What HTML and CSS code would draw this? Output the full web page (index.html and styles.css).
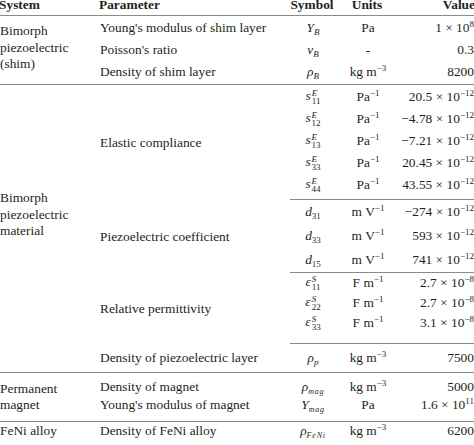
FILE: index.html
```html
<!DOCTYPE html>
<html>
<head>
<meta charset="utf-8">
<link rel="stylesheet" href="styles.css">
</head>
<body>
<div class="tbl">
  <div class="head">
    <div class="sys">System</div>
    <div class="par">Parameter</div>
    <div class="sym">Symbol</div>
    <div class="unit">Units</div>
    <div class="val">Value</div>
  </div>

  <div class="sec s1">
    <div class="sys">Bimorph<br>piezoelectric<br>(shim)</div>
    <div class="groups">
      <div class="grp">
        <div class="par">Young's modulus of shim layer</div>
        <div class="rows"><div class="row h22"><div class="sym"><i>Y</i><sub><i>B</i></sub></div><div class="unit">Pa</div><div class="val">1 × 10<sup>8</sup></div></div></div>
      </div>
      <div class="grp">
        <div class="par">Poisson's ratio</div>
        <div class="rows"><div class="row h22"><div class="sym"><i>ν</i><sub><i>B</i></sub></div><div class="unit">-</div><div class="val">0.3</div></div></div>
      </div>
      <div class="grp">
        <div class="par">Density of shim layer</div>
        <div class="rows"><div class="row h21"><div class="sym"><i>ρ</i><sub><i>B</i></sub></div><div class="unit">kg m<sup>−3</sup></div><div class="val">8200</div></div></div>
      </div>
    </div>
  </div>

  <div class="sec s2">
    <div class="sys">Bimorph<br>piezoelectric<br>material</div>
    <div class="groups">
      <div class="grp">
        <div class="par">Elastic compliance</div>
        <div class="rows cmid g-s">
          <div class="row h22"><div class="sym"><i>s</i><span class="ss"><i>E</i><span>11</span></span></div><div class="unit">Pa<sup>−1</sup></div><div class="val">20.5 × 10<sup>−12</sup></div></div>
          <div class="row h22"><div class="sym"><i>s</i><span class="ss"><i>E</i><span>12</span></span></div><div class="unit">Pa<sup>−1</sup></div><div class="val">−4.78 × 10<sup>−12</sup></div></div>
          <div class="row h22"><div class="sym"><i>s</i><span class="ss"><i>E</i><span>13</span></span></div><div class="unit">Pa<sup>−1</sup></div><div class="val">−7.21 × 10<sup>−12</sup></div></div>
          <div class="row h22"><div class="sym"><i>s</i><span class="ss"><i>E</i><span>33</span></span></div><div class="unit">Pa<sup>−1</sup></div><div class="val">20.45 × 10<sup>−12</sup></div></div>
          <div class="row h22"><div class="sym"><i>s</i><span class="ss"><i>E</i><span>44</span></span></div><div class="unit">Pa<sup>−1</sup></div><div class="val">43.55 × 10<sup>−12</sup></div></div>
        </div>
      </div>
      <div class="grp">
        <div class="par">Piezoelectric coefficient</div>
        <div class="rows cmid">
          <div class="row h24"><div class="sym"><i>d</i><sub>31</sub></div><div class="unit">m V<sup>−1</sup></div><div class="val">−274 × 10<sup>−12</sup></div></div>
          <div class="row h24"><div class="sym"><i>d</i><sub>33</sub></div><div class="unit">m V<sup>−1</sup></div><div class="val">593 × 10<sup>−12</sup></div></div>
          <div class="row h24"><div class="sym"><i>d</i><sub>15</sub></div><div class="unit">m V<sup>−1</sup></div><div class="val">741 × 10<sup>−12</sup></div></div>
        </div>
      </div>
      <div class="grp">
        <div class="par">Relative permittivity</div>
        <div class="rows cmid g-e">
          <div class="row h20"><div class="sym"><i>ε</i><span class="ss"><i>S</i><span>11</span></span></div><div class="unit">F m<sup>−1</sup></div><div class="val">2.7 × 10<sup>−8</sup></div></div>
          <div class="row h20"><div class="sym"><i>ε</i><span class="ss"><i>S</i><span>22</span></span></div><div class="unit">F m<sup>−1</sup></div><div class="val">2.7 × 10<sup>−8</sup></div></div>
          <div class="row h20"><div class="sym"><i>ε</i><span class="ss"><i>S</i><span>33</span></span></div><div class="unit">F m<sup>−1</sup></div><div class="val">3.1 × 10<sup>−8</sup></div></div>
        </div>
      </div>
      <div class="grp">
        <div class="par">Density of piezoelectric layer</div>
        <div class="rows">
          <div class="row h28"><div class="sym"><i>ρ</i><sub><i>p</i></sub></div><div class="unit">kg m<sup>−3</sup></div><div class="val">7500</div></div>
        </div>
      </div>
    </div>
  </div>

  <div class="sec s3">
    <div class="sys">Permanent<br>magnet</div>
    <div class="groups">
      <div class="grp">
        <div class="par">Density of magnet</div>
        <div class="rows"><div class="row h18"><div class="sym"><i>ρ</i><sub class="wide"><i>mag</i></sub></div><div class="unit">kg m<sup>−3</sup></div><div class="val">5000</div></div></div>
      </div>
      <div class="grp">
        <div class="par">Young's modulus of magnet</div>
        <div class="rows"><div class="row h17"><div class="sym"><i>Y</i><sub class="wide"><i>mag</i></sub></div><div class="unit">Pa</div><div class="val">1.6 × 10<sup>11</sup></div></div></div>
      </div>
    </div>
  </div>

  <div class="sec s4">
    <div class="sys">FeNi alloy</div>
    <div class="groups">
      <div class="grp">
        <div class="par">Density of FeNi alloy</div>
        <div class="rows"><div class="row h18"><div class="sym"><i>ρ</i><sub class="wide"><i>FeNi</i></sub></div><div class="unit">kg m<sup>−3</sup></div><div class="val">6200</div></div></div>
      </div>
    </div>
  </div>
</div>
</body>
</html>
```

FILE: styles.css
```css
html, body {
  margin: 0;
  padding: 0;
  background: #fff;
  overflow: hidden;
}
body {
  font-family: "Liberation Serif", "Times New Roman", serif;
  font-size: 13.4px;
  color: #231f20;
  width: 474px;
  height: 445px;
}
.tbl {
  width: 476px;
  margin-left: -1px;
  margin-top: -5px;
}
.head {
  display: flex;
  height: 20px;
  align-items: center;
  font-weight: bold;
  border-bottom: 1.5px solid #8a8a8a;
}
.sys {
  width: 100px;
  flex: none;
  line-height: 16.5px;
}
.par {
  width: 190px;
  flex: none;
}
.sym {
  width: 46px;
  flex: none;
  text-align: center;
}
.unit {
  width: 64px;
  flex: none;
  text-align: center;
}
.val {
  width: 76px;
  flex: none;
  text-align: right;
  white-space: nowrap;
}
.row .val {
  padding-right: 2px;
  box-sizing: border-box;
}
.head .sys, .head .par, .head .sym, .head .unit, .head .val {
  line-height: 16px;
}
.sec {
  display: flex;
  border-bottom: 1px solid #8a8a8a;
}
.sec .sys {
  padding-left: 1px;
}
.groups {
  display: flex;
  flex-direction: column;
  width: 376px;
}
.grp {
  display: flex;
}
.grp .par {
  display: flex;
  align-items: center;
}
.rows {
  width: 186px;
  display: flex;
  flex-direction: column;
}
.cmid {
  border-bottom: 1px solid #8a8a8a;
}
.row {
  display: flex;
  align-items: center;
  line-height: 14px;
}
.h17 { height: 17px; }
.h18 { height: 18px; }
.h20 { height: 20px; }
.h21 { height: 21px; }
.h22 { height: 22px; }
.h24 { height: 24px; }
.h28 { height: 28px; }

sub, sup {
  font-size: 9px;
  line-height: 0;
}
sub {
  vertical-align: -3px;
}
sup {
  vertical-align: 5px;
}
sub.wide {
  font-size: 8px;
  letter-spacing: 0.8px;
}
.ss {
  display: inline-flex;
  flex-direction: column;
  vertical-align: 4px;
  font-size: 9px;
  line-height: 8.5px;
  margin-left: 1px;
  text-align: left;
}
.ss span {
  font-style: normal;
}

.s1 .sys {
  align-self: center;
  padding-bottom: 4px;
}
.s1 .groups {
  padding-top: 1px;
  padding-bottom: 2px;
}
.s2 .sys {
  padding-top: 105px;
}
.g-s {
  padding-top: 1px;
  padding-bottom: 3px;
}
.g-e {
  padding-bottom: 10px;
}
.s3 .sys {
  align-self: center;
}
.s3 .groups {
  padding-top: 5px;
  padding-bottom: 8px;
}
.s4 {
  border-bottom: none;
}
.s4 .sys {
  padding-top: 1px;
}
.s4 .groups {
  padding-top: 0;
}
```
